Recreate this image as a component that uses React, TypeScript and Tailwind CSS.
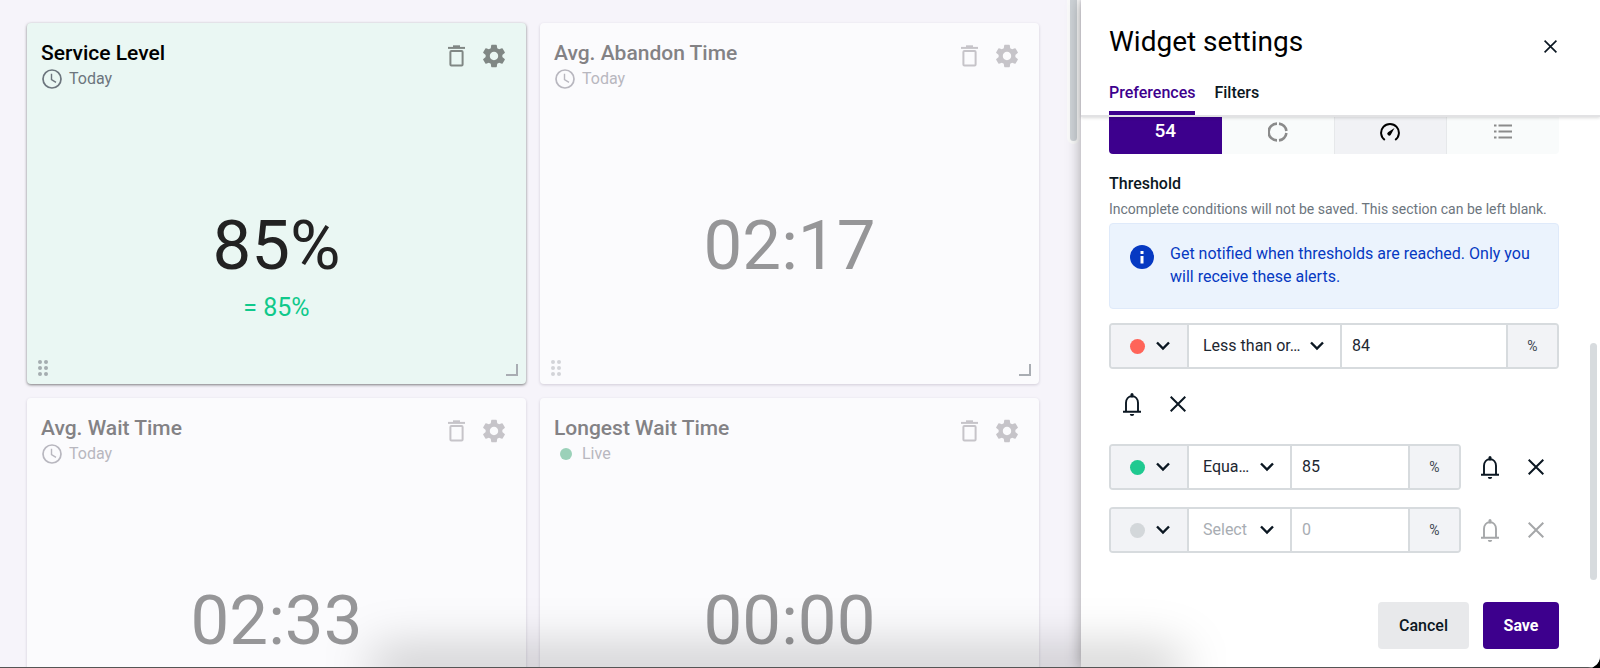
import { useState } from "react";
import { MdSettings } from "react-icons/md";

interface Widget {
  title: string;
  period: string;
  value: string;
  note?: string;
  active?: boolean;
}

const widgets: Widget[] = [
  { title: "Service Level", period: "Today", value: "85%", note: "= 85%", active: true },
  { title: "Avg. Abandon Time", period: "Today", value: "02:17" },
  { title: "Avg. Wait Time", period: "Today", value: "02:33" },
  { title: "Longest Wait Time", period: "Live", value: "00:00" },
];

function Clock() {
  return (
    <svg viewBox="0 0 20 20" className="mx-px size-5" fill="none" stroke="currentColor">
      <circle cx="10" cy="10" r="9" strokeWidth="1.7" />
      <path d="M9.500 4.800V10.500L14 13.300" strokeWidth="1.4" />
    </svg>
  );
}

function Trash() {
  return (
    <svg viewBox="0 0 17 22" className="h-[22px] w-[17px]" fill="none" stroke="currentColor">
      <path d="M0 2.900H17" strokeWidth="2" />
      <path d="M5 1.200H12" strokeWidth="1.800" />
      <rect x="2.400" y="6" width="12.200" height="14.600" rx="1" strokeWidth="2" />
    </svg>
  );
}

function WidgetCard({ title, period, value, note, active }: Widget) {
  return (
    <article
      className={`relative h-[361px] rounded px-3.5 pt-[17px] ${
        active
          ? "bg-[#eaf7f3] shadow-[0_1px_3px_rgba(0,0,0,0.5)]"
          : "bg-[#fbfbfd] shadow-[0_1px_3px_rgba(40,20,60,0.18)]"
      }`}
    >
      <div className="flex justify-between">
        <div className={active ? "text-[#6c757d]" : "text-[#b8b7bf]"}>
          <h2
            className={`text-[21px] leading-[26px] font-medium ${
              active ? "text-black" : "text-[#838285]"
            }`}
          >
            {title}
          </h2>
          <p className="flex h-[25px] items-center gap-1.5 text-[16px]">
            {period === "Live" ? (
              <span className="mr-1 ml-1.5 size-3 rounded-full bg-[#9bd1b9]" />
            ) : (
              <Clock />
            )}
            {period}
          </p>
        </div>
        <div
          className={`flex h-8 items-center gap-[15px] pr-1 ${
            active ? "text-[#808784]" : "text-[#c6c4c9]"
          }`}
        >
          <button aria-label={`Delete ${title}`}>
            <Trash />
          </button>
          <button aria-label={`Settings for ${title}`}>
            <MdSettings className="size-7" />
          </button>
        </div>
      </div>
      <div className="pt-[113px] text-center">
        <p className={`text-[69px] leading-[84px] ${active ? "text-[#222]" : "text-[#969698]"}`}>
          {value}
        </p>
        {note && <p className="text-[25px] leading-10 text-[#10c98b]">{note}</p>}
      </div>
      <svg
        viewBox="0 0 10 16"
        className={`absolute bottom-2 left-[11px] h-4 w-2.5 ${
          active ? "text-[#a5adb0]" : "text-[#d3d4d8]"
        }`}
        fill="currentColor"
      >
        {[2, 8, 14].map((y) => (
          <g key={y}>
            <circle cx="2" cy={y} r="2" />
            <circle cx="8" cy={y} r="2" />
          </g>
        ))}
      </svg>
      <span className="absolute right-2 bottom-2 size-3 border-r-2 border-b-2 border-[#a9adb3]" />
    </article>
  );
}

function Chevron() {
  return (
    <svg
      viewBox="0 0 14 10"
      className="pointer-events-none h-2.5 w-3.5 shrink-0"
      fill="none"
      stroke="#0b1722"
      strokeWidth="2.4"
    >
      <path d="M1 1.5 7 7.5 13 1.5" />
    </svg>
  );
}

function Cross({ className }: { className: string }) {
  return (
    <svg viewBox="0 0 16 16" className={className} fill="none" stroke="currentColor" strokeWidth="2">
      <path d="M.7.7 15.3 15.3M15.3.7.7 15.3" />
    </svg>
  );
}

function Bell() {
  return (
    <svg viewBox="0 0 18 23" className="h-[23px] w-[18px]" fill="none" stroke="currentColor">
      <path
        d="M0 18.700H18M3 18V9.800C3 5.900 5.500 3.200 9 3.200S15 5.900 15 9.800V18"
        strokeWidth="1.900"
      />
      <path d="M9 1.500V3" strokeWidth="3" strokeLinecap="round" />
      <path d="M6.800 21H11.200A2.200 2 0 0 1 6.800 21Z" fill="currentColor" stroke="none" />
    </svg>
  );
}

interface Condition {
  dot: string;
  label: string;
  value: string;
  wide?: boolean;
}

const conditions: Condition[] = [
  { dot: "bg-[#ff6459]", label: "Less than or…", value: "84", wide: true },
  { dot: "bg-[#1fc990]", label: "Equa…", value: "85" },
  { dot: "bg-[#d3d7da]", label: "Select", value: "" },
];

function ConditionRow({ dot, label, value, wide }: Condition) {
  const [amount, setAmount] = useState(value);
  const empty = value === "";

  return (
    <div className="flex flex-wrap items-center gap-y-[11px]">
      <div
        className={`flex h-[46px] items-stretch overflow-hidden rounded border-2 border-[#d7dbde] ${
          wide ? "w-full" : "w-[352px]"
        }`}
      >
        <button
          aria-label="Threshold colour"
          className="flex w-[78px] items-center gap-[11px] border-r-2 border-[#d7dbde] bg-[#f2f3f6] pl-[19px]"
        >
          <span className={`size-[15px] rounded-full ${dot}`} />
          <Chevron />
        </button>
        <div
          className={`relative flex items-center border-r-2 border-[#d7dbde] ${
            wide ? "w-[153px]" : "w-[103px]"
          }`}
        >
          <select
            aria-label="Condition"
            className={`h-full w-full appearance-none pl-3.5 text-[16px] outline-none ${
              empty ? "text-[#a8adb3]" : "text-[#1d2731]"
            }`}
          >
            <option>{label}</option>
          </select>
          <span className="pointer-events-none absolute right-4">
            <Chevron />
          </span>
        </div>
        <input
          aria-label="Value"
          className="min-w-0 flex-1 pl-2.5 text-[16px] text-[#1d2731] outline-none placeholder:text-[#a8adb3]"
          placeholder="0"
          value={amount}
          onChange={(e) => setAmount(e.target.value)}
        />
        <span className="flex w-[51px] items-center justify-center border-l-2 border-[#d7dbde] bg-[#f2f3f6] text-[14px] text-[#3c4650]">
          %
        </span>
      </div>
      <div
        className={`flex h-12 items-center gap-[29px] ${wide ? "pl-3.5" : "pl-5"} ${
          empty ? "text-[#a5a7a9]" : "text-[#0b1722]"
        }`}
      >
        <button aria-label="Notify me">
          <Bell />
        </button>
        <button aria-label="Remove condition">
          <Cross className="size-4" />
        </button>
      </div>
    </div>
  );
}

export default function App() {
  const [tab, setTab] = useState("Preferences");

  return (
    <div className="h-screen bg-black font-['Roboto',sans-serif]">
      <div className="relative flex h-full overflow-hidden rounded-br-xl bg-[#f6f4fa]">
        <main className="relative h-full min-w-0 flex-1 overflow-hidden pt-[23px] pr-[42px] pl-[27px]">
          <div className="grid grid-cols-2 gap-3.5">
            {widgets.map((w) => (
              <WidgetCard key={w.title} {...w} />
            ))}
          </div>
          <div className="absolute top-0 right-px h-[144px] w-[13px] rounded-b-full bg-[#fafafa] px-[3px] pb-[3px]">
            <div className="h-full rounded-b-full bg-[#ced3d7]" />
          </div>
        </main>

        <aside className="relative flex h-full w-[519px] shrink-0 flex-col bg-white shadow-[0_0_14px_rgba(0,0,0,0.35)]">
          <header className="relative z-10 border-b-2 border-[#e2e2e4] bg-white px-7 pt-[21px] shadow-[0_1px_3px_rgba(0,0,0,0.15)]">
            <div className="flex items-center justify-between pr-[15px]">
              <h1 className="text-[28px] leading-[42px] text-black">Widget settings</h1>
              <button aria-label="Close" className="pt-2 text-[#0b1722]">
                <Cross className="size-[13px]" />
              </button>
            </div>
            <nav className="flex gap-[19px] pt-[19px]">
              {["Preferences", "Filters"].map((name) => (
                <button
                  key={name}
                  onClick={() => setTab(name)}
                  className={`h-[33px] border-b-4 pb-2.5 text-[16px] leading-[22px] font-medium ${
                    tab === name
                      ? "border-[#3d008d] text-[#3d008d]"
                      : "border-transparent text-[#0b1722]"
                  }`}
                >
                  {name}
                </button>
              ))}
            </nav>
          </header>

          <div className="min-h-0 flex-1 overflow-hidden pr-[41px] pl-7">
            <div className="-mt-2 grid h-[45px] grid-cols-4 overflow-hidden rounded bg-[#f9fbfb]">
              <button className="flex items-center justify-center bg-[#3d008d] text-[19px] font-medium text-white">
                54
              </button>
              <button aria-label="Donut" className="flex items-center justify-center">
                <svg viewBox="0 0 20 20" className="size-5" fill="none" stroke="#8b8b8b" strokeWidth="2.600">
                  <path d="M11 1.600A8.400 8.400 0 0 1 18.400 9M18.400 11A8.400 8.400 0 0 1 11 18.400M9 18.400A8.400 8.400 0 0 1 9 1.600" />
                </svg>
              </button>
              <button
                aria-label="Gauge"
                className="flex items-center justify-center border-x border-[#e6e8ea] bg-[#f1f2f5]"
              >
                <svg viewBox="0 0 20 20" className="size-5" fill="none" stroke="#000" strokeWidth="2">
                  <path d="M4.800 18A8.900 8.900 0 1 1 15.200 18" />
                  <path d="M14.500 6 8 10.200A1.900 1.900 0 1 0 10.800 12.700Z" fill="#000" stroke="none" />
                </svg>
              </button>
              <button aria-label="List" className="flex items-center justify-center">
                <svg
                  viewBox="0 0 18 15"
                  className="h-[15px] w-[18px]"
                  fill="none"
                  stroke="#8b8b8b"
                  strokeWidth="1.800"
                >
                  <path d="M0 1.500H2.500M4.500 1.500H18M0 7.500H2.500M4.500 7.500H18M0 13.500H2.500M4.500 13.500H18" />
                </svg>
              </button>
            </div>

            <h3 className="pt-[18px] text-[16px] leading-6 font-medium text-[#0b1722]">Threshold</h3>
            <p className="pt-0.5 text-[14px] leading-[22px] whitespace-nowrap text-[#6c757d]">
              Incomplete conditions will not be saved. This section can be left blank.
            </p>
            <div className="mt-[3px] flex h-[86px] gap-4 rounded border border-[#dfeafa] bg-[#ebf3fd] pt-[18px] pr-5 pl-5">
              <svg viewBox="0 0 24 24" className="mt-[3px] size-6 shrink-0">
                <circle cx="12" cy="12" r="12" fill="#0639c2" />
                <path d="M10.500 6H13.500V9H10.500ZM10.500 11H13.500V18.500H10.500Z" fill="#fff" />
              </svg>
              <p className="text-[16px] leading-[23px] text-[#0639c2]">
                Get notified when thresholds are reached. Only you will receive these alerts.
              </p>
            </div>

            <div className="flex flex-col gap-[15px] pt-3.5">
              {conditions.map((c) => (
                <ConditionRow key={c.label} {...c} />
              ))}
            </div>
          </div>

          <footer className="flex justify-end gap-3.5 pr-[41px] pb-[19px] text-[16px] font-medium">
            <button className="h-[47px] w-[91px] rounded bg-[#e8e9eb] text-[#0b1722]">Cancel</button>
            <button className="h-[47px] w-[76px] rounded bg-[#3d008d] font-bold text-white">Save</button>
          </footer>
          <div className="absolute top-[343px] right-[3px] h-[237px] w-[7px] rounded-full bg-[#d7dbde]" />
        </aside>

        <div className="pointer-events-none absolute right-[26%] -bottom-5 left-[23%] h-10 rounded-full bg-black/20 blur-xl" />
        <div className="pointer-events-none absolute inset-x-0 bottom-0 h-px bg-[#555]" />
      </div>
    </div>
  );
}
